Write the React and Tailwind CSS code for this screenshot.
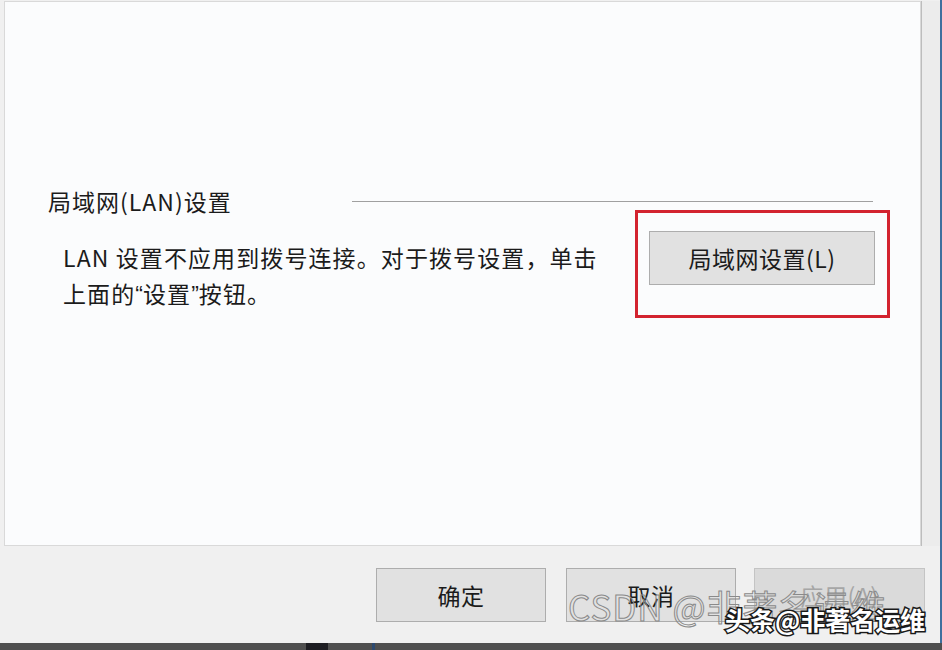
import React from 'react';

const font = { fontFamily: '"Noto Sans CJK SC", "Noto Sans", sans-serif' };

const DialogButton = ({ children, disabled, className = '' }) => (
  <div
    className={`flex items-center justify-center h-[54px] border ${
      disabled ? 'border-[#c4c4c4] bg-[#dadada] text-[#a6a6a6]' : 'border-[#adadad] bg-[#e1e1e1] text-[#1b1b1b]'
    } text-[23px] tracking-[0.5px] ${className}`}
  >
    {children}
  </div>
);

const Q = ({ children }) => <span className="font-['Liberation_Sans'] tracking-normal">{children}</span>;

const App = () => (
  <div className="relative w-[942px] h-[650px] overflow-hidden bg-[#f0f0f0]" style={font}>
    <div className="flex h-[643px]">
      <div className="w-[940px] flex flex-col pt-[1px]">
        <div className="flex h-[545px]">
          <div className="ml-[4px] w-[917px] h-full bg-[#fbfcfd] border border-[#d9d9d9] pt-[187px] text-[#1b1b1b]">
            <div className="flex items-center pl-[43px] pr-[47px] h-[24px]">
              <span className="text-[23px] leading-[24px] tracking-[1px]">局域网(LAN)设置</span>
              <div className="ml-auto w-[521px] h-px bg-[#a0a0a0]" />
            </div>
            <div className="flex -mt-[3px] pr-[30px]">
              <div className="flex-1 pl-[58px] pt-[29px] text-[23px] leading-[36px] tracking-[1.1px]">
                <div>LAN 设置不应用到拨号连接。对于拨号设置，单击</div>
                <div>
                  上面的<Q>“</Q>设置<Q>”</Q>按钮。
                </div>
              </div>
              <div className="w-[255px] h-[108px] border-[3px] border-[#d3232f] pl-[11px] pt-[18px]">
                <DialogButton className="w-[226px] h-[53px]">局域网设置(L)</DialogButton>
              </div>
            </div>
          </div>
          <div className="flex-1 border-l border-[#bdbdbd] bg-[#ececec]" />
        </div>
        <div className="flex justify-end pr-[15px] pt-[22px]">
          <DialogButton className="w-[170px]">确定</DialogButton>
          <DialogButton className="w-[170px] ml-[20px]">取消</DialogButton>
          <DialogButton disabled className="w-[171px] ml-[18px]">应用(A)</DialogButton>
        </div>
      </div>
      <div className="w-[2px] bg-[#3f6f9e]" />
    </div>
    <div className="flex h-[7px] bg-[#4f4f4f]">
      <div className="w-[306px]" />
      <div className="w-[22px] bg-[#1d1d22]" />
      <div className="w-[44px]" />
      <div className="w-[3px] bg-[#2d4a70]" />
    </div>

    <div className="absolute left-[568px] top-[586px] text-[35px] leading-[40px] text-transparent [-webkit-text-stroke:1px_#8a8a8a] tracking-[1px]">
      CSDN @非著名运维
    </div>
    <div className="absolute left-[725px] top-[604px] text-[25px] leading-[30px] font-bold text-white [-webkit-text-stroke:3px_#1a1a1a] [paint-order:stroke_fill]">
      头条@非著名运维
    </div>
  </div>
);

export default App;
